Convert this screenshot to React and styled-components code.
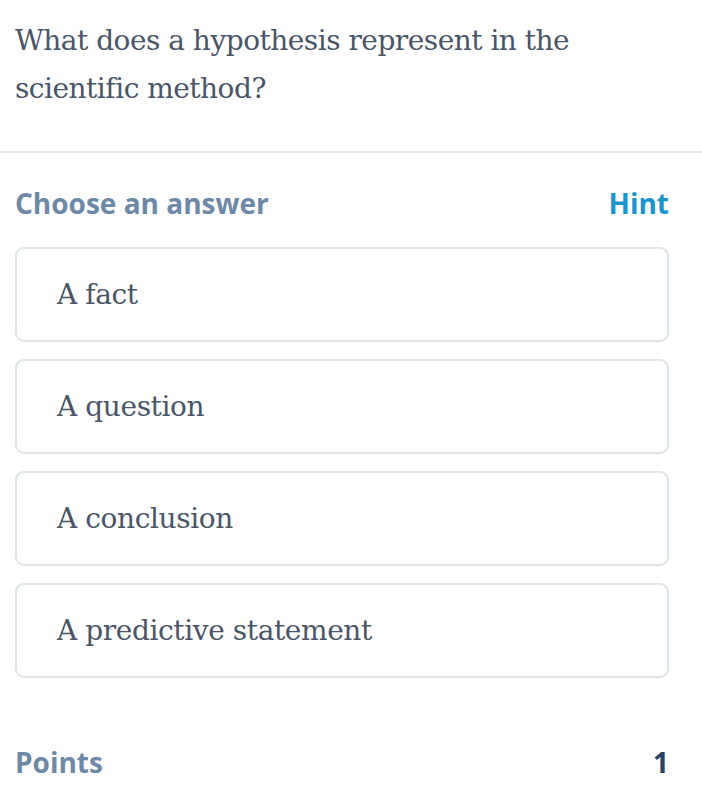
import React from "react";
import styled, { createGlobalStyle } from "styled-components";

const Global = createGlobalStyle`
  html, body { margin: 0; padding: 0; background: #fff; }
  * { box-sizing: border-box; }
`;

const Page = styled.div`
  width: 702px;
  display: flex;
  flex-direction: column;
`;

const Question = styled.h1`
  margin: 0;
  padding: 17px 15px 0;
  height: 153px;
  font-family: "DejaVu Serif", "Liberation Serif", serif;
  font-weight: 400;
  font-size: 28px;
  line-height: 48px;
  color: #4a5668;
  letter-spacing: -0.5px;
  border-bottom: 2px solid #e6ebee;
`;

const Body = styled.div`
  padding: 0 33px 0 15px;
  display: flex;
  flex-direction: column;
`;

const HeaderRow = styled.div`
  display: flex;
  justify-content: space-between;
  align-items: center;
  height: 94px;
  padding-top: 6px;
`;

const Label = styled.span`
  font-family: "Open Sans", sans-serif;
  font-weight: 700;
  font-size: 28px;
  color: ${(p) => p.$color || "#6e89a7"};
`;

const Options = styled.div`
  display: flex;
  flex-direction: column;
  gap: 17px;
`;

const Option = styled.button`
  height: 95px;
  flex: 0 0 95px;
  width: 100%;
  border: 2px solid #dfe5e9;
  border-radius: 9px;
  background: #fff;
  text-align: left;
  padding: 0 0 0 40px;
  display: flex;
  align-items: center;
  font-family: "DejaVu Serif", "Liberation Serif", serif;
  font-size: 28px;
  color: #4a5668;
  letter-spacing: -0.4px;
  cursor: pointer;
`;

const Footer = styled.div`
  display: flex;
  justify-content: space-between;
  align-items: center;
  margin-top: 64px;
  height: 40px;
`;

const answers = ["A fact", "A question", "A conclusion", "A predictive statement"];

export default function App() {
  return (
    <Page>
      <Global />
      <Question>What does a hypothesis represent in the scientific method?</Question>
      <Body>
        <HeaderRow>
          <Label>Choose an answer</Label>
          <Label $color="#1b95d0">Hint</Label>
        </HeaderRow>
        <Options>
          {answers.map((a) => (
            <Option key={a}>{a}</Option>
          ))}
        </Options>
        <Footer>
          <Label>Points</Label>
          <Label $color="#2a4365">1</Label>
        </Footer>
      </Body>
    </Page>
  );
}
